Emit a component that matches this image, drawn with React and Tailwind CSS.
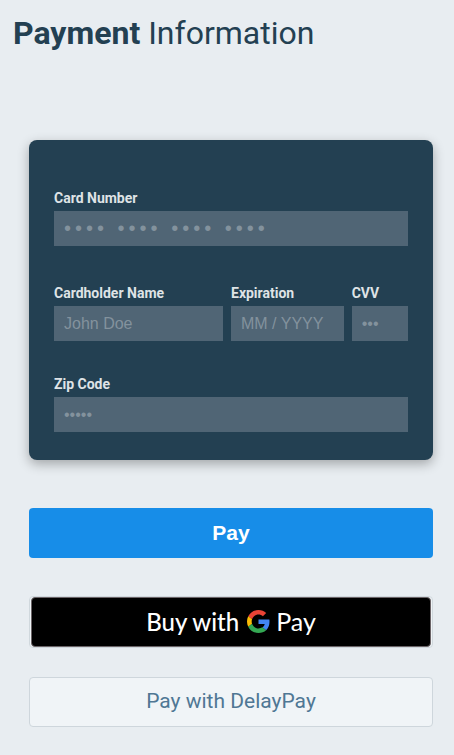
import { useId } from 'react'

const GROUPED_DOTS = Array(4).fill('•\u2009•\u2009•\u2009•').join('\u2009 \u2009')

function Field({ label, className = '', inputClass = 'text-base', ...props }) {
  const id = useId()

  return (
    <div className={`flex min-w-0 flex-col ${className}`}>
      <label htmlFor={id} className="mb-[3px] text-sm leading-5 font-bold whitespace-nowrap text-[#dfe3e6]">
        {label}
      </label>
      <input
        id={id}
        type="text"
        className={`h-[35px] w-full min-w-0 bg-[#506575] px-[10px] font-['Liberation_Sans',sans-serif] text-white outline-none placeholder:text-[#83929d] placeholder:opacity-100 ${inputClass}`}
        {...props}
      />
    </div>
  )
}

function GoogleMark() {
  return (
    <svg viewBox="0 0 48 48" className="h-[23px] w-[23px]" aria-hidden="true">
      <path fill="#EA4335" d="M24 9.5c3.54 0 6.71 1.22 9.21 3.6l6.85-6.85C35.9 2.38 30.47 0 24 0 14.62 0 6.51 5.38 2.56 13.22l7.98 6.19C12.43 13.72 17.74 9.5 24 9.5z" />
      <path fill="#4285F4" d="M46.98 24.55c0-1.57-.15-3.09-.38-4.55H24v9.02h12.94c-.58 2.96-2.26 5.48-4.78 7.18l7.73 6c4.51-4.18 7.09-10.36 7.09-17.65z" />
      <path fill="#FBBC05" d="M10.53 28.59c-.48-1.45-.76-2.99-.76-4.59s.27-3.14.76-4.59l-7.98-6.19C.92 16.46 0 20.12 0 24c0 3.88.92 7.54 2.56 10.78l7.97-6.19z" />
      <path fill="#34A853" d="M24 48c6.48 0 11.93-2.13 15.89-5.81l-7.73-6c-2.15 1.45-4.92 2.3-8.16 2.3-6.26 0-11.57-4.22-13.47-9.91l-7.98 6.19C6.51 42.62 14.62 48 24 48z" />
    </svg>
  )
}

export default function App() {
  return (
    <main className="min-h-screen bg-[#e8edf1] font-[Roboto,sans-serif] text-[#234052]">
      <h1 className="px-[13px] pt-3 text-[32px] leading-[42px] font-normal">
        <strong className="font-bold">Payment</strong> Information
      </h1>

      <form className="pt-[86px] pr-[21px] pb-7 pl-[29px]" onSubmit={(e) => e.preventDefault()}>
        {/* ── Card details ── */}
        <div className="rounded-lg bg-[#234052] px-[25px] pt-12 pb-7 shadow-[0_4px_12px_rgba(0,0,0,0.3)]">
          <Field label="Card Number" placeholder={GROUPED_DOTS} inputClass="text-xl" />
          <div className="mt-[37px] flex gap-2">
            <Field label="Cardholder Name" placeholder="John Doe" className="flex-[3]" />
            <Field label="Expiration" placeholder="MM / YYYY" className="flex-[2]" />
            <Field label="CVV" placeholder="•••" className="flex-[1]" />
          </div>
          <Field label="Zip Code" placeholder="•••••" className="mt-[33px]" />
        </div>

        {/* ── Payment buttons ── */}
        <button type="submit" className="mt-12 h-[50px] w-full rounded bg-[#178de8] font-['Liberation_Sans',sans-serif] text-[21px] font-bold text-white">
          Pay
        </button>
        <div className="mt-[38px] rounded border border-[#d0d8dd] bg-[#f0f4f7] px-px">
          <button type="button" className="flex h-[50px] w-full items-center justify-center gap-2 rounded border border-[#6b6467] bg-black font-[Lato,sans-serif] text-2xl text-white">
            <span className="font-medium">Buy with</span>
            <span className="flex items-center gap-[6px]">
              <GoogleMark />
              <span className="text-[25px]">Pay</span>
            </span>
          </button>
        </div>
        <button type="button" className="mt-[29px] h-[50px] w-full rounded border border-[#ced6dc] bg-[#f0f4f7] text-[21px] text-[#4f7794]">
          Pay with DelayPay
        </button>
      </form>
    </main>
  )
}
